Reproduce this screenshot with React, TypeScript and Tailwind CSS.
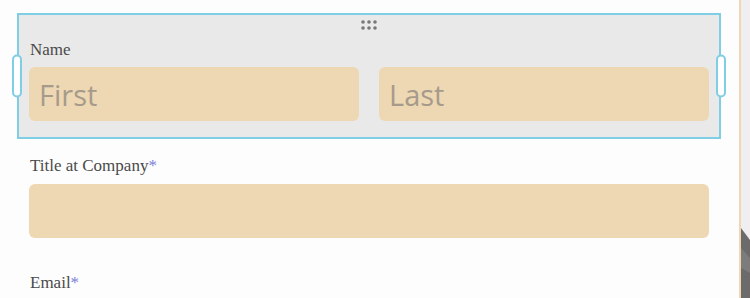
import { type ReactNode } from 'react';

const serif = { fontFamily: '"Liberation Serif", "DejaVu Serif", serif' };
const sans = { fontFamily: '"Open Sans", "Noto Sans", sans-serif' };

function Label({ children, required }: { children: ReactNode; required?: boolean }) {
    return (
        <div className="text-[17px] leading-[27px] text-[#4a4a4a] pl-px" style={serif}>
            {children}
            {required && <span className="text-[#7c7fd8]">*</span>}
        </div>
    );
}

function Field({ placeholder }: { placeholder?: string }) {
    return (
        <div
            className="h-[54px] flex-1 rounded-[6px] bg-[#eed7b3] flex items-center pl-[10px] pt-px text-[29px] text-[#a69b8b]"
            style={sans}
        >
            {placeholder}
        </div>
    );
}

function Handle({ side }: { side: 'left' | 'right' }) {
    return (
        <div
            className={
                'absolute top-1/2 -translate-y-1/2 w-[10px] h-[43px] rounded-full bg-white border-2 border-[#80cde6] ' +
                (side === 'left' ? '-left-[7px]' : '-right-[7px]')
            }
        />
    );
}

function DragDots() {
    return (
        <svg className="absolute top-[5px] left-1/2 -translate-x-1/2" width="16" height="10" viewBox="0 0 16 10">
            {[2, 8, 14].map(x =>
                [2, 8].map(y => <circle key={`${x}-${y}`} cx={x} cy={y} r="1.8" fill="#777" />)
            )}
        </svg>
    );
}

export default function App() {
    return (
        <div className="w-[750px] h-[298px] overflow-hidden flex bg-[#fdfdfd]">
            <div className="w-[739px] shrink-0">
                {/* selected row */}
                <div className="ml-[17px] mt-[13px] w-[704px] relative border-2 border-[#80cde6] bg-[#e9e9e9] px-[10px] pt-[21px] pb-[16px]">
                    <DragDots />
                    <Handle side="left" />
                    <Handle side="right" />
                    <Label>Name</Label>
                    <div className="flex gap-[20px] mt-[4px]">
                        <Field placeholder="First" />
                        <Field placeholder="Last" />
                    </div>
                </div>

                <div className="pl-[29px] w-[709px]">
                    <div className="mt-[13px]">
                        <Label required>Title at Company</Label>
                        <div className="flex mt-[5px]">
                            <Field />
                        </div>
                    </div>
                    <div className="mt-[31px]">
                        <Label required>Email</Label>
                    </div>
                </div>
            </div>

            <div className="w-[2px] shrink-0 bg-[#eed7b3]" />
            <div className="flex-1 bg-[#efeff1] relative">
                <svg className="absolute left-0 bottom-0" width="9" height="70" viewBox="0 0 9 70">
                    <polygon points="0,0 9,12 9,70 0,70" fill="#6b6b6b" />
                    <polygon points="0,20 9,30 9,45 0,40" fill="#7c7c7c" />
                </svg>
            </div>
        </div>
    );
}
